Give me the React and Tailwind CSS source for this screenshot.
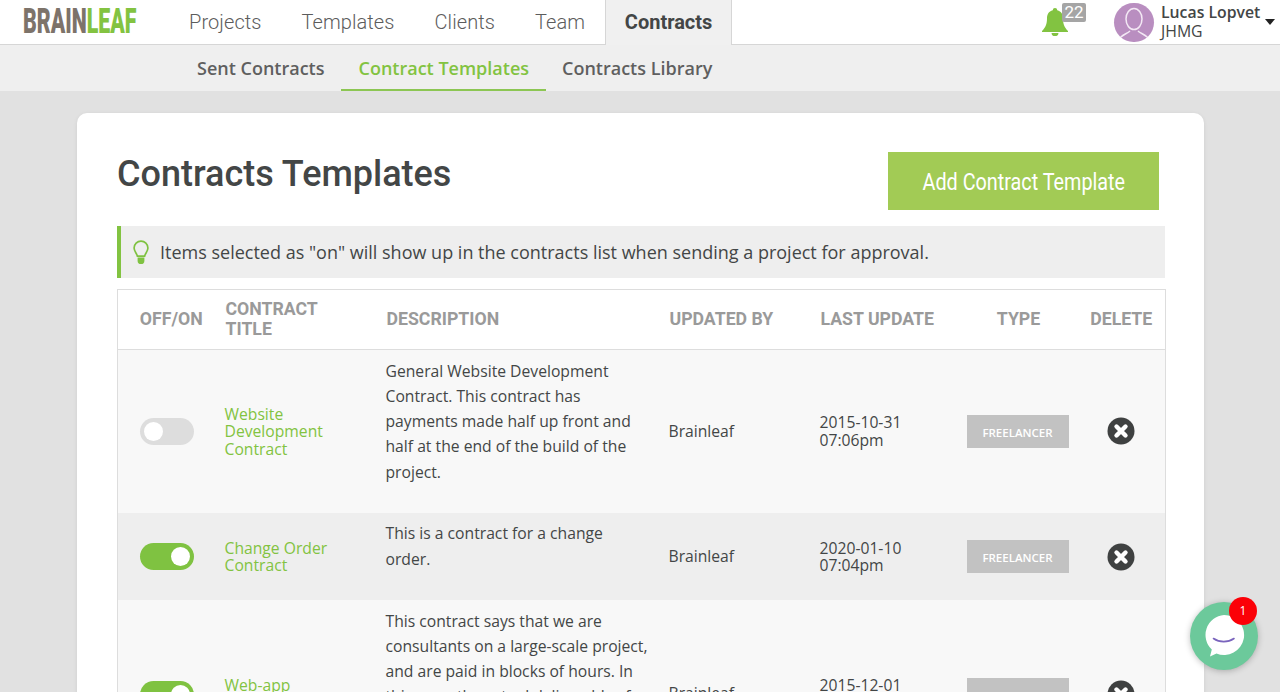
const openSans = '[font-family:"Open_Sans",sans-serif]'

const mainNav = ['Projects', 'Templates', 'Clients', 'Team']

const contracts = [
  {
    title: 'Website Development Contract',
    description:
      'General Website Development Contract. This contract has payments made half up front and half at the end of the build of the project.',
    date: '2015-10-31',
    time: '07:06pm',
    on: false,
  },
  {
    title: 'Change Order Contract',
    description: 'This is a contract for a change order.',
    date: '2020-01-10',
    time: '07:04pm',
    on: true,
  },
  {
    title: 'Web-app Development',
    description:
      'This contract says that we are consultants on a large-scale project, and are paid in blocks of hours. In this case, the actual deliverables for the project are defined later on in the process.',
    date: '2015-12-01',
    time: '10:12am',
    on: true,
  },
]

function Toggle({ on }) {
  return (
    <div className={`flex h-[27px] w-[54px] items-center rounded-full px-[4px] ${on ? 'justify-end bg-[#7fc241]' : 'justify-start bg-[#dddddd]'}`}>
      <div className="h-[19px] w-[19px] rounded-full bg-white" />
    </div>
  )
}

function DeleteIcon() {
  return (
    <svg width="28" height="28" viewBox="0 0 28 28" className="mx-auto block">
      <circle cx="14" cy="14" r="13.5" fill="#3f4141" />
      <path d="M9.5 9.5 L18.5 18.5 M18.5 9.5 L9.5 18.5" stroke="#fff" strokeWidth="4.4" strokeLinecap="round" />
    </svg>
  )
}

function BulbIcon() {
  return (
    <svg width="16" height="25" viewBox="0 0 16 25" fill="none" className="shrink-0">
      <path d="M8 1.2a6.9 6.9 0 0 0-6.9 6.9c0 3.4 2.6 5 3.3 8.1h7.2c.7-3.1 3.3-4.7 3.3-8.1A6.9 6.9 0 0 0 8 1.2Z" stroke="#7fc241" strokeWidth="1.7" />
      <path d="M4.6 17.5h6.800v3.200a3.400 3.400 0 0 1-6.800 0Z" fill="#7fc241" />
    </svg>
  )
}

function BellIcon() {
  return (
    <svg width="26" height="28" viewBox="0 0 26 28" className="absolute left-0 top-[8px]">
      <path d="M13 0a2.200 2.200 0 0 1 2.200 2.300C19.500 3.300 21 6.600 21 10.500c0 5.500 1.500 9 5 12.500v1H0v-1c3.500-3.500 5-7 5-12.500 0-3.900 1.500-7.200 5.800-8.200A2.200 2.200 0 0 1 13 0Z" fill="#82c341" />
      <path d="M9.500 25h7a3.500 3.200 0 0 1-7 0Z" fill="#82c341" />
    </svg>
  )
}

function ChatWidget() {
  return (
    <div className="absolute left-[1190px] top-[602px] flex h-[68px] w-[68px] items-center justify-center rounded-full bg-[#6cc99b] shadow-[0_1px_6px_rgba(0,0,0,0.25)]">
      <svg width="42" height="44" viewBox="0 0 42 44">
        <path d="M21 1a20 20 0 1 1-7.500 38.500L7 42.500l1.800-7A20 20 0 0 1 21 1Z" fill="#fff" />
        <path d="M10.500 24.500c6 4.200 14.500 4.200 20.500 0" fill="none" stroke="#7a64bd" strokeWidth="1.600" strokeLinecap="round" />
      </svg>
      <span className={`absolute left-[39px] top-[-5px] flex h-[28px] w-[28px] items-center justify-center rounded-full bg-[#fb0007] text-[12px] text-white ${openSans}`}>
        1
      </span>
    </div>
  )
}

export default function App() {
  return (
    <div className="relative h-[692px] w-[1280px] overflow-hidden bg-[#e1e1e1]">
      {/* Top bar */}
      <header className="flex h-[45px] items-stretch border-b border-[#d6d6d6] bg-white">
        <div className="ml-[23px] mr-[33px] flex w-[113px] items-center whitespace-nowrap">
          <span className="origin-left scale-x-[0.61] text-[35px] font-black [font-family:Roboto,sans-serif]">
            <span className="text-[#7d736a]">BRAIN</span>
            <span className="text-[#83c341]">LEAF</span>
          </span>
        </div>
        <nav className="flex text-[20px] font-light tracking-[0.08px] text-[#5c5c5c] [font-family:Roboto,sans-serif]">
          {mainNav.map((item) => (
            <a key={item} className="flex items-center px-[20px]">{item}</a>
          ))}
          <a className="z-10 flex h-[45px] w-[127px] items-center justify-center border-x border-[#d6d6d6] bg-[#f0f0f0] pb-[1px] font-bold tracking-normal text-[#434646]">
            Contracts
          </a>
        </nav>
        <div className="ml-auto flex items-center">
          <div className="relative mr-[28px] h-[44px] w-[44px]">
            <BellIcon />
            <span className="absolute left-[20px] top-[3px] flex h-[19px] w-[24px] items-center justify-center rounded-[2px] bg-[#a5a5a5] text-[17px] leading-none text-white [font-family:Roboto,sans-serif]">
              22
            </span>
          </div>
          <div className="mr-[7px] flex h-[39px] w-[40px] items-center justify-center overflow-hidden rounded-full bg-[#b98ec0]">
            <svg width="40" height="39" viewBox="0 0 40 39" fill="none" stroke="#f3e8f4" strokeWidth="1.500">
              <ellipse cx="20" cy="16" rx="8" ry="10.500" />
              <path d="M4 38c2-6 9-7 12-10M36 38c-2-6-9-7-12-10M8 39c7 2 17 2 24 0" />
            </svg>
          </div>
          <div className={`w-[104px] text-[15.800px] leading-[19px] text-[#434646] ${openSans}`}>
            <div className="-mt-[1px] font-semibold">Lucas Lopvet</div>
            <div>JHMG</div>
          </div>
          <div className="mr-[5px] h-0 w-0 border-x-[5px] border-t-[6px] border-x-transparent border-t-[#222]" />
        </div>
      </header>

      {/* Sub nav */}
      <div className={`flex h-[46px] bg-[#efefef] pl-[180px] text-[18px] font-semibold text-[#5f5f5f] ${openSans}`}>
        <a className="flex items-center px-[17px]">Sent Contracts</a>
        <a className="flex items-center border-b-2 border-[#8cc653] px-[17px] pt-[2px] text-[#82c341]">Contract Templates</a>
        <a className="-ml-[1px] flex items-center px-[17px]">Contracts Library</a>
      </div>

      {/* Card */}
      <main className="mx-[77px] mt-[22px] w-[1127px] rounded-[10px] bg-white px-[40px] pt-[39px] shadow-[0_1px_4px_rgba(0,0,0,0.08)]">
        <div className="flex items-start justify-between pr-[5px]">
          <h1 className="text-[36px] font-medium leading-[44px] text-[#434646] [font-family:Roboto,sans-serif]">
            Contracts Templates
          </h1>
          <button className="flex h-[58px] w-[271px] items-center justify-center bg-[#a2cb55] pt-[2px] text-white [font-family:Roboto,sans-serif]">
            <span className="inline-block scale-x-[0.825] whitespace-nowrap text-[24px]">Add Contract Template</span>
          </button>
        </div>

        <div className={`mr-[-1px] mt-[16px] flex h-[52px] items-center gap-[11px] border-l-[4px] border-[#82c341] bg-[#eeeeee] pl-[12px] text-[18px] text-[#434646] ${openSans}`}>
          <BulbIcon />
          <span className="pt-[1px]">Items selected as "on" will show up in the contracts list when sending a project for approval.</span>
        </div>

        <table className="mt-[11px] w-[1048px] table-fixed border border-[#dddddd]">
          <colgroup>
            <col className="w-[95px]" />
            <col className="w-[161px]" />
            <col className="w-[283px]" />
            <col className="w-[151px]" />
            <col className="w-[147px]" />
            <col className="w-[126px]" />
            <col className="w-[85px]" />
          </colgroup>
          <thead>
            <tr className="h-[60px] border-b border-[#dddddd] text-[17.700px] leading-[20px] text-[#9a9a9a] [font-family:Roboto,sans-serif]">
              <th className="pb-[2px] pl-[12px] text-center font-bold">OFF/ON</th>
              <th className="pb-[2px] pl-[13px] pr-[20px] text-left font-bold">CONTRACT TITLE</th>
              <th className="pb-[2px] pl-[13px] text-left font-bold">DESCRIPTION</th>
              <th className="pb-[2px] pl-[13px] text-left font-bold">UPDATED BY</th>
              <th className="pb-[2px] pl-[13px] text-left font-bold">LAST UPDATE</th>
              <th className="pb-[2px] pl-[2px] text-center font-bold">TYPE</th>
              <th className="pb-[2px] pr-[3px] text-center font-bold">DELETE</th>
            </tr>
          </thead>
          <tbody className={`${openSans} text-[15.700px] text-[#434646]`}>
            {contracts.map((c, i) => (
              <tr key={c.title} className={i % 2 === 1 ? 'bg-[#eeeeee]' : 'bg-[#f8f8f8]'}>
                <td className="pl-[22px]"><Toggle on={c.on} /></td>
                <td className="pl-[12px] pr-[20px] pt-[1px] leading-[17.500px] text-[#82c341]">{c.title}</td>
                <td className="pb-[28px] pl-[12px] pr-[7px] pt-[8.500px] leading-[25.300px]">{c.description}</td>
                <td className="pl-[12px]">Brainleaf</td>
                <td className="pl-[12px] pt-[1px] leading-[17.500px]">
                  {c.date}
                  <br />
                  {c.time}
                </td>
                <td>
                  <div className="mx-auto flex h-[33px] w-[102px] items-center justify-center bg-[#c2c2c2] pt-[3px] text-[11.500px] font-semibold text-white">
                    FREELANCER
                  </div>
                </td>
                <td className="pr-[3px]"><DeleteIcon /></td>
              </tr>
            ))}
          </tbody>
        </table>
      </main>

      <ChatWidget />
    </div>
  )
}
